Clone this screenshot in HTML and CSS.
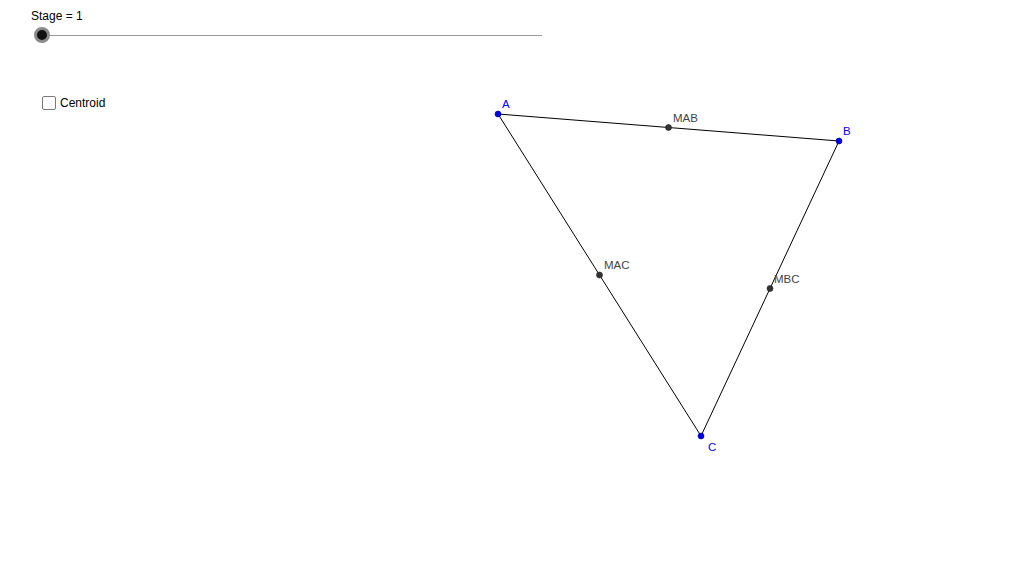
FILE: index.html
```html
<!DOCTYPE html>
<html>
<head>
<meta charset="utf-8">
<link rel="stylesheet" href="styles.css">
</head>
<body>
<div class="app">
  <div class="controls">
    <div class="slider">
      <div class="slider-label">Stage = 1</div>
      <div class="slider-track">
        <div class="slider-line"></div>
        <div class="slider-thumb"></div>
      </div>
    </div>
    <label class="check">
      <span class="box"></span>
      <span class="check-text">Centroid</span>
    </label>
  </div>
  <svg class="canvas" width="1024" height="576" viewBox="0 0 1024 576">
    <g stroke="#000" stroke-width="1" fill="none">
      <line x1="498" y1="114" x2="839" y2="141"/>
      <line x1="839" y1="141" x2="701" y2="436"/>
      <line x1="701" y1="436" x2="498" y2="114"/>
    </g>
    <g fill="#333" stroke="#222" stroke-width="0.6">
      <circle cx="668.5" cy="127.5" r="3"/>
      <circle cx="599.5" cy="275" r="3"/>
      <circle cx="770" cy="288.5" r="3"/>
    </g>
    <g fill="#0000e6" stroke="#00008a" stroke-width="0.6">
      <circle cx="498" cy="114" r="3"/>
      <circle cx="839" cy="141" r="3"/>
      <circle cx="701" cy="436" r="3"/>
    </g>
    <g class="lbl-pt">
      <text x="502" y="108">A</text>
      <text x="843" y="135">B</text>
      <text x="708" y="451">C</text>
    </g>
    <g class="lbl-mid">
      <text x="673" y="122">MAB</text>
      <text x="604" y="269">MAC</text>
      <text x="774" y="283">MBC</text>
    </g>
  </svg>
</div>
</body>
</html>
```
FILE: styles.css
```css
html, body {
  margin: 0;
  padding: 0;
  background: #fff;
}
body {
  font-family: "Liberation Sans", Arial, sans-serif;
  color: #000;
}
.app {
  position: relative;
  width: 1024px;
  height: 576px;
  overflow: hidden;
}
.controls {
  position: relative;
  z-index: 1;
  display: flex;
  flex-direction: column;
  padding: 9px 0 0 31px;
}
.slider {
  display: flex;
  flex-direction: column;
  width: 512px;
}
.slider-label {
  font-size: 12px;
  line-height: 14px;
  height: 14px;
}
.slider-track {
  position: relative;
  height: 24px;
  margin-left: 11px;
  width: 500px;
}
.slider-line {
  position: absolute;
  left: 0;
  right: 0;
  top: 12px;
  height: 1px;
  background: #999;
}
.slider-thumb {
  position: absolute;
  left: -8px;
  top: 4px;
  width: 10px;
  height: 10px;
  border-radius: 50%;
  background: #111;
  border: 3px solid #8a8a8a;
}
.check {
  display: flex;
  align-items: center;
  gap: 4px;
  margin-top: 49px;
  margin-left: 11px;
}
.box {
  width: 12px;
  height: 12px;
  border: 1px solid #7a7a7a;
  border-radius: 2px;
  background: #fff;
}
.check-text {
  font-size: 12px;
  line-height: 14px;
}
.canvas {
  position: absolute;
  left: 0;
  top: 0;
}
.lbl-pt text {
  font-family: "Liberation Sans", Arial, sans-serif;
  font-size: 11.5px;
  fill: #0000ff;
}
.lbl-mid text {
  font-family: "Liberation Sans", Arial, sans-serif;
  font-size: 11.5px;
  fill: #444;
}
```
